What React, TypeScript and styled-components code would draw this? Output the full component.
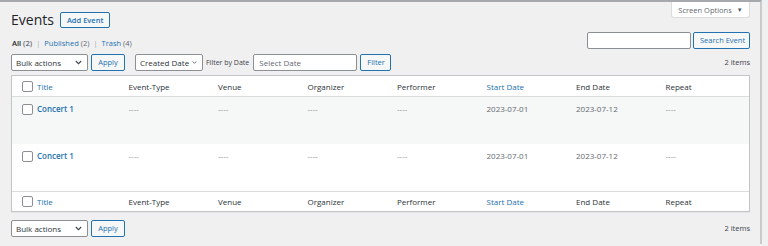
import { createGlobalStyle } from "styled-components"
import styled from "styled-components"

const GlobalStyle = createGlobalStyle`
  html, body {
    margin: 0;
    padding: 0;
    background: #f0f0f1;
  }
  body {
    font-family: "Open Sans", "Noto Sans", sans-serif;
    color: #3c434a;
    font-size: 8px;
  }
`

const Page = styled.div`
  width: 762px;
  height: 244px;
  box-sizing: border-box;
  border-top: 2px solid #a7aaad;
  border-right: 2px solid #c9cacc;
  padding: 0 10px 0 11px;
  display: flex;
  flex-direction: column;
`

const HeaderRow = styled.div`
  display: flex;
  justify-content: space-between;
  align-items: flex-start;
  height: 29px;
`

const TitleWrap = styled.div`
  display: flex;
  align-items: center;
  gap: 6px;
  padding-top: 10px;
`

const Heading = styled.h1`
  margin: 0;
  font-size: 14px;
  font-weight: 400;
  line-height: 16px;
  color: #1d2327;
`

const OutlineButton = styled.button<{ $w?: number }>`
  height: 17px;
  box-sizing: border-box;
  padding: 0 6px;
  border: 1px solid #2271b1;
  border-radius: 2px;
  background: #f6f7f7;
  color: #2271b1;
  font-family: inherit;
  font-size: 7.5px;
  line-height: 15px;
  white-space: nowrap;
  cursor: pointer;
  ${p => (p.$w ? `width: ${p.$w}px;` : "")}
`

const AddButton = styled(OutlineButton)`
  height: 16px;
  font-weight: 600;
  background: #f6f7f7;
`

const ScreenTab = styled.button`
  width: 79px;
  height: 16px;
  box-sizing: border-box;
  border: 1px solid #dcdcde;
  border-top: none;
  border-radius: 0 0 3px 3px;
  background: #fff;
  color: #646970;
  font-family: inherit;
  font-size: 7.5px;
  display: flex;
  align-items: center;
  justify-content: center;
  gap: 5px;
  padding: 0;
`

const Arrow = styled.span`
  font-size: 6px;
  color: #50575e;
`

const SubRow = styled.div`
  display: flex;
  justify-content: space-between;
  align-items: flex-end;
  height: 18px;
`

const Views = styled.div`
  display: flex;
  gap: 4px;
  font-size: 7.5px;
  color: #646970;
  padding: 0 0 1px 1px;
`

const ViewLink = styled.a<{ $current?: boolean }>`
  color: ${p => (p.$current ? "#1d2327" : "#2271b1")};
  font-weight: ${p => (p.$current ? 600 : 400)};
  text-decoration: none;
`

const Count = styled.span`
  color: #646970;
`

const Sep = styled.span`
  color: #a7aaad;
`

const SearchBox = styled.div`
  display: flex;
  gap: 2px;
`

const TextInput = styled.input<{ $w: number }>`
  width: ${p => p.$w}px;
  height: 17px;
  box-sizing: border-box;
  border: 1px solid #8c8f94;
  border-radius: 2px;
  background: #fff;
  padding: 0 5px;
  font-family: inherit;
  font-size: 8px;
  color: #2c3338;
  &::placeholder {
    color: #646970;
  }
`

const Nav = styled.div<{ $top?: boolean }>`
  display: flex;
  align-items: center;
  height: 18px;
  margin-top: ${p => (p.$top ? 4 : 7)}px;
  margin-bottom: ${p => (p.$top ? 4 : 0)}px;
`

const Group = styled.div<{ $gap?: number }>`
  display: flex;
  align-items: center;
  gap: ${p => p.$gap ?? 3}px;
  margin-right: 10px;
`

const Select = styled.div<{ $w: number }>`
  width: ${p => p.$w}px;
  height: 17px;
  box-sizing: border-box;
  border: 1px solid #8c8f94;
  border-radius: 2px;
  background: #fff;
  display: flex;
  align-items: center;
  justify-content: space-between;
  gap: 3px;
  padding: 0 5px 0 4px;
  font-size: 8px;
  white-space: nowrap;
  color: #2c3338;
`

const Chevron = () => (
  <svg width="7" height="5" viewBox="0 0 7 5">
    <path d="M0.8 1 L3.5 3.7 L6.2 1" fill="none" stroke="#3c434a" strokeWidth="1.1" />
  </svg>
)

const FilterLabel = styled.span`
  font-size: 7px;
  white-space: nowrap;
  color: #3c434a;
  margin-right: 1px;
`

const ItemCount = styled.span`
  margin-left: auto;
  font-size: 7.5px;
  color: #3c434a;
`

const Table = styled.div`
  border: 1px solid #c3c4c7;
  background: #fff;
  box-shadow: 0 1px 1px rgba(0, 0, 0, 0.04);
`

const Row = styled.div<{ $kind: "head" | "foot" | "odd" | "even" }>`
  display: grid;
  grid-template-columns: 21px repeat(8, 1fr);
  align-items: ${p => (p.$kind === "head" || p.$kind === "foot" ? "center" : "start")};
  height: ${p => (p.$kind === "head" ? 21 : p.$kind === "foot" ? 20 : 47)}px;
  background: ${p => (p.$kind === "odd" ? "#f6f7f7" : "#fff")};
  border-bottom: ${p => (p.$kind === "head" ? "1px solid #dcdcde" : "none")};
  border-top: ${p => (p.$kind === "foot" ? "1px solid #dcdcde" : "none")};
  box-sizing: border-box;
`

const CheckCell = styled.div<{ $body?: boolean }>`
  display: flex;
  justify-content: flex-end;
  padding-top: ${p => (p.$body ? 7 : 0)}px;
`

const Check = styled.span`
  width: 9px;
  height: 9px;
  border: 1px solid #8c8f94;
  border-radius: 2px;
  background: #fff;
`

const Cell = styled.div<{ $body?: boolean; $link?: boolean; $strong?: boolean; $first?: boolean }>`
  padding-left: ${p => (p.$first ? 4 : 6)}px;
  padding-top: ${p => (p.$body ? 6 : 0)}px;
  font-size: 8px;
  line-height: 11px;
  white-space: nowrap;
  color: ${p => (p.$link ? "#2271b1" : p.$body ? "#8c8f94" : "#2c3338")};
  font-weight: ${p => (p.$strong ? 600 : 400)};
`

const DateCell = styled(Cell)`
  color: #646970;
`

const columns = ["Event-Type", "Venue", "Organizer", "Performer", "Start Date", "End Date", "Repeat"]

const HeadRow = ({ kind }: { kind: "head" | "foot" }) => (
  <Row $kind={kind}>
    <CheckCell><Check /></CheckCell>
    <Cell $first $link>Title</Cell>
    {columns.map(c => (
      <Cell key={c} $link={c === "Start Date"}>{c}</Cell>
    ))}
  </Row>
)

const events = [
  { title: "Concert 1", start: "2023-07-01", end: "2023-07-12" },
  { title: "Concert 1", start: "2023-07-01", end: "2023-07-12" },
]

const BulkNav = ({ top }: { top?: boolean }) => (
  <Nav $top={top}>
    <Group>
      <Select $w={77}>Bulk actions<Chevron /></Select>
      <OutlineButton $w={34}>Apply</OutlineButton>
    </Group>
    {top && (
      <Group $gap={3}>
        <Select $w={68}>Created Date<Chevron /></Select>
        <FilterLabel>Filter by Date</FilterLabel>
        <TextInput $w={104} placeholder="Select Date" />
        <OutlineButton $w={31}>Filter</OutlineButton>
      </Group>
    )}
    <ItemCount>2 items</ItemCount>
  </Nav>
)

export default function App() {
  return (
    <>
      <GlobalStyle />
      <Page>
        <HeaderRow>
          <TitleWrap>
            <Heading>Events</Heading>
            <AddButton>Add Event</AddButton>
          </TitleWrap>
          <ScreenTab>Screen Options <Arrow>▼</Arrow></ScreenTab>
        </HeaderRow>
        <SubRow>
          <Views>
            <ViewLink $current>All <Count>(2)</Count></ViewLink>
            <Sep>|</Sep>
            <ViewLink>Published <Count>(2)</Count></ViewLink>
            <Sep>|</Sep>
            <ViewLink>Trash <Count>(4)</Count></ViewLink>
          </Views>
          <SearchBox>
            <TextInput $w={104} />
            <OutlineButton $w={57}>Search Event</OutlineButton>
          </SearchBox>
        </SubRow>
        <BulkNav top />
        <Table>
          <HeadRow kind="head" />
          {events.map((e, i) => (
            <Row key={i} $kind={i % 2 === 0 ? "odd" : "even"}>
              <CheckCell $body><Check /></CheckCell>
              <Cell $body $first $link $strong>{e.title}</Cell>
              <Cell $body>----</Cell>
              <Cell $body>----</Cell>
              <Cell $body>----</Cell>
              <Cell $body>----</Cell>
              <DateCell $body>{e.start}</DateCell>
              <DateCell $body>{e.end}</DateCell>
              <Cell $body>----</Cell>
            </Row>
          ))}
          <HeadRow kind="foot" />
        </Table>
        <BulkNav />
      </Page>
    </>
  )
}
